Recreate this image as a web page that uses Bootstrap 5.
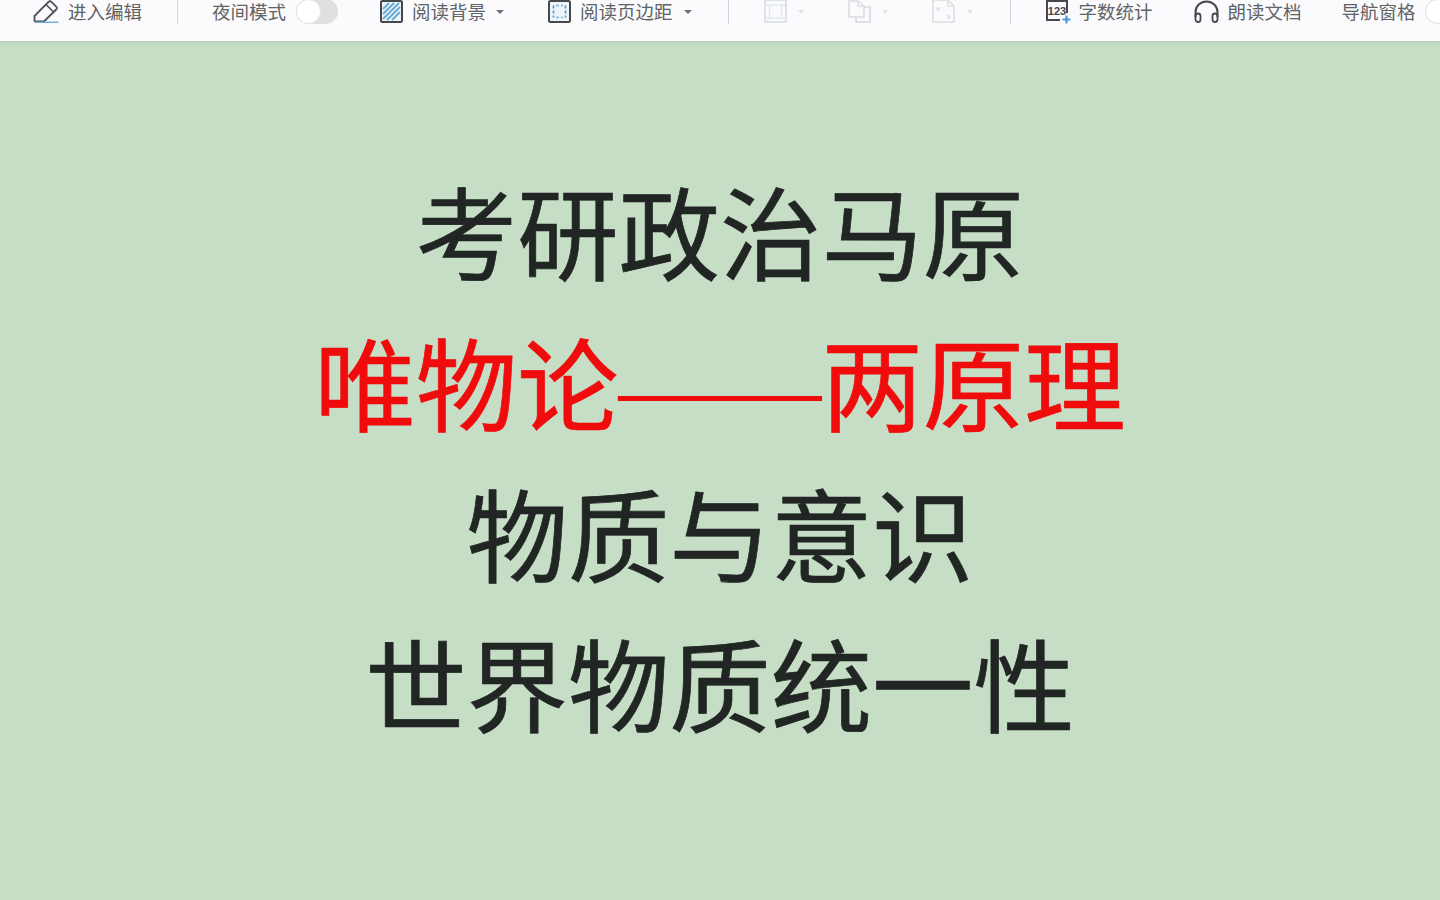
<!DOCTYPE html>
<html lang="zh-CN">
<head>
<meta charset="utf-8">
<title>考研政治马原</title>
<link href="https://cdn.jsdelivr.net/npm/bootstrap@5.3.0/dist/css/bootstrap.min.css" rel="stylesheet">
<style>
html,body{height:100%;overflow:hidden}
body{background:#c6dec6;font-family:"Noto Sans CJK SC","Noto Sans",sans-serif;color:#212624}
.tool-strip{height:41px;background:#fbfbfd;padding-left:33px;box-shadow:0 1px 3px rgba(90,110,90,.2);color:#606367;font-size:18.5px;line-height:21px;white-space:nowrap}
.tool-row{height:23px}
.tool-row svg{display:block;flex:none}
.tool-label{display:block;margin-bottom:1px}
.tool-sep{width:1px;height:24px;background:#d4d5d8;flex:none}
.tool-caret{width:0;height:0;border-left:4px solid transparent;border-right:4px solid transparent;border-top:4px solid #6d7074;flex:none}
.tool-caret.is-off{border-top-color:#e3e4e7;border-left-width:3.5px;border-right-width:3.5px}
.tool-switch{width:42px;height:25px;border-radius:13px;background:#e0e0e1;flex:none;display:block}
.tool-knob{width:25px;height:25px;border-radius:50%;background:#fff;border:1px solid #e4e4e6;display:block}
.ml-8{margin-left:8px}.ml-9{margin-left:9px}.ml-10{margin-left:10px}.ml-11{margin-left:11px}.ml-12{margin-left:12px}
.ml-34{margin-left:34px}.ml-35{margin-left:35px}.ml-36{margin-left:36px}.ml-37{margin-left:37px}.ml-40{margin-left:40px}.ml-41{margin-left:41px}.ml-42{margin-left:42px}.ml-44{margin-left:44px}
.slide-text{padding-top:113px;text-align:center;font-size:101.4px;line-height:150.8px}
.slide-line{margin:0;font-size:inherit;font-weight:400;line-height:inherit;white-space:nowrap;-webkit-text-stroke:.7px currentColor}
.slide-red{color:#f00c0c}
.slide-dash{font-family:"Liberation Serif",serif;line-height:0;vertical-align:2px;-webkit-text-stroke:0}
</style>
</head>
<body>
<header class="tool-strip">
  <div class="tool-row d-flex align-items-center">
    <svg width="27" height="23" viewBox="0 0 27 23" fill="none"><path d="M1.500 21.500V16L15.500 1.800a2 2 0 0 1 2.900 0l4.800 4.800a2 2 0 0 1 0 2.900L11 21.500H1.500" stroke="#4d5054" stroke-width="1.800" stroke-linejoin="round"/><path d="M13 4.500l7.500 7.500" stroke="#4d5054" stroke-width="1.600"/><path d="M3 22.300h22.500" stroke="#6cb0da" stroke-width="1.500"/></svg>
    <span class="tool-label ml-8">进入编辑</span>
    <span class="tool-sep ml-35"></span>
    <span class="tool-label ml-34">夜间模式</span>
    <span class="tool-switch ml-10"><span class="tool-knob"></span></span>
    <svg class="ml-42" width="23" height="23" viewBox="0 0 23 23" fill="none"><rect x="1" y="1" width="21" height="21" rx="1.500" fill="#eef5fa" stroke="#45484c" stroke-width="2"/><path d="M3 9L9 3M3 14L14 3M3 19L19 3M7 20L20 7M12 20L20 12" stroke="#6aaad3" stroke-width="2"/></svg>
    <span class="tool-label ml-9">阅读背景</span>
    <span class="tool-caret ml-10"></span>
    <svg class="ml-44" width="23" height="23" viewBox="0 0 23 23" fill="none"><rect x="1" y="1" width="21" height="21" rx="1.500" fill="#eef4f8" stroke="#45484c" stroke-width="2"/><path d="M5.500 5.500v12M17.500 5.500v12" stroke="#4f93c4" stroke-width="1.600" stroke-dasharray="3 2"/><path d="M8 5.500h7M8 17.500h7" stroke="#7cb3d8" stroke-width="1.300" stroke-dasharray="3 2"/></svg>
    <span class="tool-label ml-9">阅读页边距</span>
    <span class="tool-caret ml-11"></span>
    <span class="tool-sep ml-36"></span>
    <svg class="ml-35" width="23" height="23" viewBox="0 0 23 23" fill="none"><rect x="1" y="0" width="21" height="22" stroke="#d6dce2" stroke-width="1.600"/><path d="M1 5h21M1 18h21M5.500 5v13M17.500 5v13" stroke="#dfe7ee" stroke-width="1.400"/></svg>
    <span class="tool-caret is-off ml-11"></span>
    <svg class="ml-44" width="23" height="23" viewBox="0 0 23 23" fill="none"><path d="M1 1h9l6 5v11H1z" stroke="#dcdddf" stroke-width="1.600"/><path d="M16 7h6v15H8v-5" stroke="#d8d9db" stroke-width="1.600"/><path d="M10 1v5h6" stroke="#dcdddf" stroke-width="1.400"/></svg>
    <span class="tool-caret is-off ml-11"></span>
    <svg class="ml-44" width="23" height="23" viewBox="0 0 23 23" fill="none"><path d="M1 0h15l6 6v16H1z" stroke="#dddee0" stroke-width="1.600"/><path d="M16 0v6h6" stroke="#dddee0" stroke-width="1.300"/><path d="M5 8l3 3M5 8v3M5 8h3M18 18l-3-3M18 18v-3M18 18h-3" stroke="#e0e4e8" stroke-width="1.400"/></svg>
    <span class="tool-caret is-off ml-12"></span>
    <span class="tool-sep ml-37"></span>
    <svg class="ml-35" width="25" height="24" viewBox="0 0 25 24" fill="none"><path d="M21 13V1H1v19h13" stroke="#45484c" stroke-width="2"/><text x="11" y="15" text-anchor="middle" font-family="Liberation Sans,sans-serif" font-size="11" font-weight="700" fill="#45484c">123</text><path d="M20.500 15.500v8M16.500 19.500h8" stroke="#4f94e0" stroke-width="2.200"/></svg>
    <span class="tool-label ml-8">字数统计</span>
    <svg class="ml-41" width="25" height="23" viewBox="0 0 25 23" fill="none"><path d="M1.500 17V12a11 10.500 0 0 1 22 0v5" stroke="#45484c" stroke-width="2"/><rect x="1.500" y="13.500" width="5" height="8.500" rx="2.500" stroke="#45484c" stroke-width="1.800"/><rect x="18.500" y="13.500" width="5" height="8.500" rx="2.500" stroke="#45484c" stroke-width="1.800"/></svg>
    <span class="tool-label ml-9">朗读文档</span>
    <span class="tool-label ml-40">导航窗格</span>
    <span class="tool-switch ml-9"><span class="tool-knob"></span></span>
  </div>
</header>
<main class="slide-text">
  <h1 class="slide-line">考研政治马原</h1>
  <h1 class="slide-line slide-red">唯物论<span class="slide-dash">——</span>两原理</h1>
  <h1 class="slide-line">物质与意识</h1>
  <h1 class="slide-line">世界物质统一性</h1>
</main>
</body>
</html>
